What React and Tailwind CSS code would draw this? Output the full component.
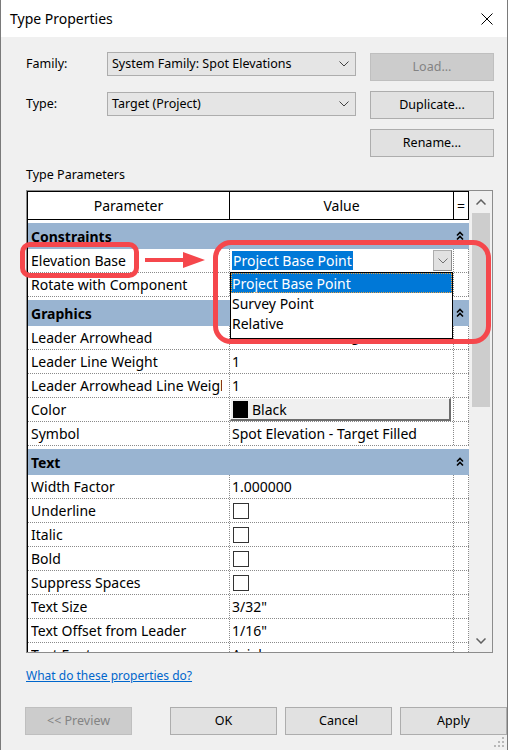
import React from 'react';

const Chevron = ({ color = '#404040' }) => (
  <svg width="10" height="6" viewBox="0 0 10 6">
    <path d="M0.5 0.5 L5 5 L9.5 0.5" fill="none" stroke={color} strokeWidth="1" />
  </svg>
);

const DoubleCaret = () => (
  <svg width="8" height="10" viewBox="0 0 8 10">
    <path d="M1 4.5 L4 1.5 L7 4.5 M1 8.5 L4 5.5 L7 8.5" fill="none" stroke="#000" strokeWidth="1.6" />
  </svg>
);

const Combo = ({ value }) => (
  <div className="w-[249px] h-[24px] bg-[#e5e5e5] border border-[#adadad] flex items-center justify-between pl-[4px] pr-[6px]">
    <span>{value}</span>
    <Chevron />
  </div>
);

const Btn = ({ children, disabled, className = '' }) => (
  <div
    className={`h-[28px] w-[124px] flex items-center justify-center border ${
      disabled ? 'bg-[#cccccc] border-[#bfbfbf] text-[#838383]' : 'bg-[#e1e1e1] border-[#adadad] text-black'
    } ${className}`}
  >
    {children}
  </div>
);

const Check = () => <div className="w-[16px] h-[16px] border border-[#333333] bg-white ml-[1px]" />;

const ElevationValue = () => (
  <div className="flex items-center justify-between w-full pr-[1px]">
    <span className="bg-[#0078d7] text-white h-[19px] leading-[19px] px-[1px]">Project Base Point</span>
    <div className="w-[19px] h-[21px] bg-[#e1e1e1] border border-[#adadad] border-b-[#8c8c8c] border-r-[#8c8c8c] flex items-center justify-center">
      <Chevron color="#707070" />
    </div>
  </div>
);

const ColorValue = () => (
  <div className="w-full h-[23px] bg-[#f0f0f0] border-t border-l border-white border-r-2 border-b-2 border-r-[#6d6d6d] border-b-[#6d6d6d] flex items-center -ml-[2px] pl-[2px]">
    <div className="w-[15px] h-[17px] bg-black" />
    <span className="ml-[4px]">Black</span>
  </div>
);

// value mostly hidden behind the open dropdown
const ArrowheadValue = () => <span className="relative -top-[2px]">Arrow Filled 30 Degree</span>;

const rows = [
  { group: 'Constraints' },
  { name: 'Elevation Base', value: <ElevationValue /> },
  { name: 'Rotate with Component', value: <Check /> },
  { group: 'Graphics' },
  { name: 'Leader Arrowhead', value: <ArrowheadValue /> },
  { name: 'Leader Line Weight', value: '1' },
  { name: 'Leader Arrowhead Line Weight', value: '1' },
  { name: 'Color', value: <ColorValue /> },
  { name: 'Symbol', value: 'Spot Elevation - Target Filled' },
  { group: 'Text' },
  { name: 'Width Factor', value: '1.000000' },
  { name: 'Underline', value: <Check /> },
  { name: 'Italic', value: <Check /> },
  { name: 'Bold', value: <Check /> },
  { name: 'Suppress Spaces', value: <Check /> },
  { name: 'Text Size', value: '3/32"' },
  { name: 'Text Offset from Leader', value: '1/16"' },
  { name: 'Text Font', value: 'Arial' },
  { name: 'Text Background', value: 'Opaque' },
];

const GridRow = ({ row }) => {
  if (row.group) {
    return (
      <div className="pt-[3px] bg-white shrink-0">
        <div className="h-[26px] bg-[#99b4d1] flex items-center justify-between pl-[3px] pr-[5px] font-bold">
          <span>{row.group}</span>
          <DoubleCaret />
        </div>
      </div>
    );
  }
  return (
    <div className="flex h-[24px] shrink-0 bg-white border-b border-dotted border-[#8a8a8a]">
      <div className="w-[202px] shrink-0 border-r border-dotted border-[#8a8a8a] pl-[3px] flex items-center">
        <span className="block w-[191px] overflow-hidden whitespace-nowrap">{row.name}</span>
      </div>
      <div className="w-[224px] shrink-0 border-r border-dotted border-[#8a8a8a] pl-[2px] flex items-center overflow-hidden whitespace-nowrap">
        {row.value}
      </div>
      <div className="w-[15px] shrink-0 border-r border-dotted border-[#8a8a8a]" />
    </div>
  );
};

export default function App() {
  return (
    <div className="relative w-[508px] h-[750px] overflow-hidden font-['Noto_Sans','DejaVu_Sans',sans-serif] text-[12.5px] text-black">
      <div className="w-[508px] h-[750px] border-x border-[#7a7a7a] bg-[#f0f0f0] flex flex-col">
        {/* Title bar */}
        <div className="h-[37px] bg-white flex items-center justify-between pl-[9px] pr-[14px] shrink-0">
          <span className="text-[14px]">Type Properties</span>
          <svg width="12" height="12" viewBox="0 0 12 12">
            <path d="M0.5 0.5 L11.5 11.5 M11.5 0.5 L0.5 11.5" stroke="#000" strokeWidth="1" />
          </svg>
        </div>

        <div className="pl-[25px] flex flex-col">
          {/* Family */}
          <div className="flex items-start mt-[15px]">
            <div className="w-[81px] h-[24px] flex items-center">Family:</div>
            <Combo value="System Family: Spot Elevations" />
            <Btn disabled className="ml-[14px] mt-[1px]">Load...</Btn>
          </div>
          {/* Type */}
          <div className="flex items-start mt-[10px]">
            <div className="w-[81px] h-[24px] mt-[1px] flex items-center">Type:</div>
            <div className="mt-[1px]">
              <Combo value="Target (Project)" />
            </div>
            <Btn className="ml-[14px]">Duplicate...</Btn>
          </div>
          <div className="flex mt-[10px] pl-[344px]">
            <Btn>Rename...</Btn>
          </div>

          <div className="mt-[8px] h-[20px] leading-[20px]">Type Parameters</div>

          {/* Property grid */}
          <div className="mt-[5px] w-[467px] h-[463px] border border-[#8c8c8c] flex bg-white text-[14px]">
            <div className="w-[442px] h-full border-l border-black overflow-hidden flex flex-col">
              <div className="flex h-[29px] shrink-0 border-y border-black bg-white">
                <div className="w-[202px] shrink-0 border-r border-black flex items-center justify-center">Parameter</div>
                <div className="w-[224px] shrink-0 border-r border-black flex items-center justify-center">Value</div>
                <div className="w-[15px] shrink-0 border-r border-black flex items-center justify-center">=</div>
              </div>
              {rows.map((row, i) => (
                <GridRow key={i} row={row} />
              ))}
            </div>
            {/* Scrollbar */}
            <div className="w-[23px] h-full bg-[#f0f0f0] flex flex-col items-center">
              <div className="h-[22px] w-full flex items-center justify-center">
                <svg width="10" height="6" viewBox="0 0 10 6">
                  <path d="M0.5 5.5 L5 1 L9.5 5.5" fill="none" stroke="#606060" strokeWidth="1.5" />
                </svg>
              </div>
              <div className="w-[18px] h-[194px] bg-[#cdcdcd]" />
              <div className="flex-1" />
              <div className="h-[22px] w-full flex items-center justify-center">
                <svg width="10" height="6" viewBox="0 0 10 6">
                  <path d="M0.5 0.5 L5 5 L9.5 0.5" fill="none" stroke="#606060" strokeWidth="1.5" />
                </svg>
              </div>
            </div>
          </div>

          <div className="mt-[13px] h-[20px] leading-[20px] text-[12px] text-[#0066cc] underline">What do these properties do?</div>

          <div className="flex mt-[21px] -ml-[1px]">
            <Btn disabled className="w-[104px]">&lt;&lt; Preview</Btn>
            <Btn className="w-[104px] ml-[38px]">OK</Btn>
            <Btn className="w-[104px] ml-[8px]">Cancel</Btn>
            <Btn className="w-[104px] ml-[8px]">Apply</Btn>
          </div>
        </div>
      </div>

      {/* Open dropdown list */}
      <div className="absolute left-[230px] top-[272px] w-[223px] h-[67px] bg-white border border-black text-[14px]">
        <div className="h-[20px] bg-[#0078d7] text-white flex items-center pl-[1px] outline outline-1 outline-dotted outline-[#e8a040] -outline-offset-1">
          Project Base Point
        </div>
        <div className="h-[20px] flex items-center pl-[1px]">Survey Point</div>
        <div className="h-[20px] flex items-center pl-[1px]">Relative</div>
      </div>

      {/* Annotations */}
      <div className="absolute left-[20px] top-[242px] w-[119px] h-[36px] border-[5px] border-[#f5474c] rounded-[10px]" />
      <svg className="absolute left-[143px] top-[250px]" width="64" height="20" viewBox="0 0 64 20">
        <rect x="2" y="8" width="40" height="4" fill="#f5474c" />
        <polygon points="40,2 62,10 40,18" fill="#f5474c" />
      </svg>
      <div className="absolute left-[213px] top-[240px] w-[278px] h-[104px] border-[5px] border-[#f5474c] rounded-[18px]" />

      {/* Resize grip */}
      <svg className="absolute right-[2px] bottom-[1px]" width="12" height="12" viewBox="0 0 12 12">
        <rect x="8" y="0" width="2" height="2" fill="#b8b8b8" />
        <rect x="4" y="4" width="2" height="2" fill="#b8b8b8" />
        <rect x="8" y="4" width="2" height="2" fill="#b8b8b8" />
        <rect x="0" y="8" width="2" height="2" fill="#b8b8b8" />
        <rect x="4" y="8" width="2" height="2" fill="#b8b8b8" />
        <rect x="8" y="8" width="2" height="2" fill="#b8b8b8" />
      </svg>
    </div>
  );
}
